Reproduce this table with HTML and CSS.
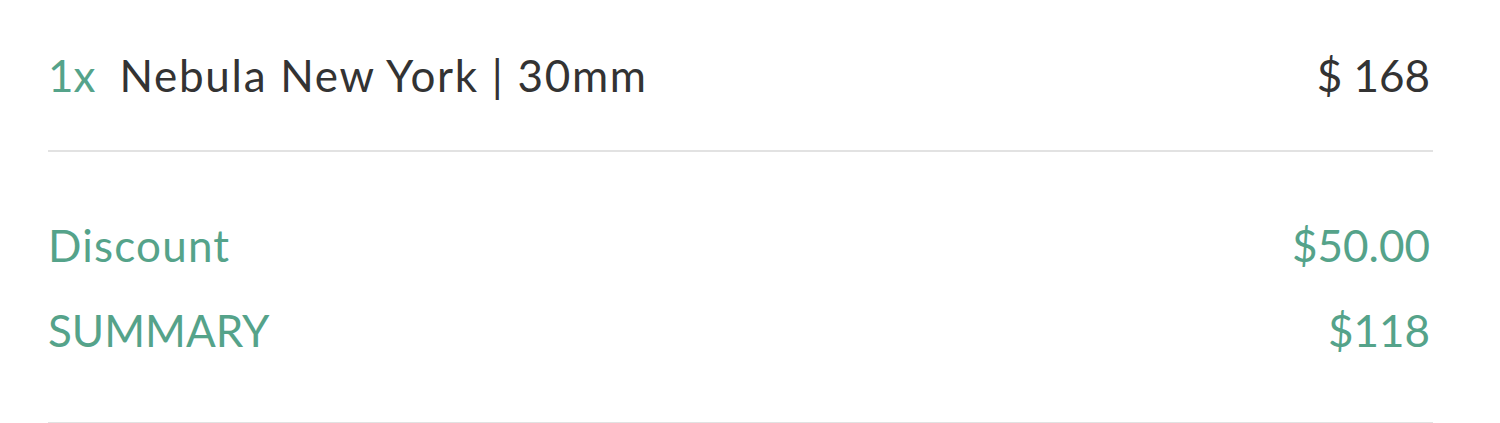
FILE: index.html
```html
<!DOCTYPE html>
<html>
<head>
<meta charset="utf-8">
<link rel="stylesheet" href="styles.css">
</head>
<body>
<div class="summary">
  <div class="item-row">
    <div class="item">
      <span class="qty">1x</span>
      <span class="name">Nebula New York | 30mm</span>
    </div>
    <span class="price">$ 168</span>
  </div>
  <div class="totals">
    <div class="total-row">
      <span class="label-discount">Discount</span>
      <span>$50.00</span>
    </div>
    <div class="total-row">
      <span>SUMMARY</span>
      <span>$118</span>
    </div>
  </div>
</div>
</body>
</html>
```
FILE: styles.css
```css
html, body {
  margin: 0;
  padding: 0;
  background: #ffffff;
}
body {
  font-family: Lato, "Open Sans", sans-serif;
  font-size: 44px;
  color: #333333;
}
.summary {
  margin: 0 67px 0 48px;
}
.item-row {
  display: flex;
  justify-content: space-between;
  align-items: center;
  height: 150px;
  border-bottom: 2px solid #e2e2e2;
  padding-right: 3px;
}
.item {
  display: flex;
  gap: 24px;
}
.qty {
  color: #55a38a;
}
.name {
  letter-spacing: 1.7px;
}
.totals {
  display: flex;
  flex-direction: column;
  padding: 50px 3px 50px 0;
  border-bottom: 2px solid #e2e2e2;
  color: #55a38a;
}
.total-row {
  display: flex;
  justify-content: space-between;
  align-items: center;
  height: 85px;
}
.label-discount {
  letter-spacing: 1.2px;
}
```
